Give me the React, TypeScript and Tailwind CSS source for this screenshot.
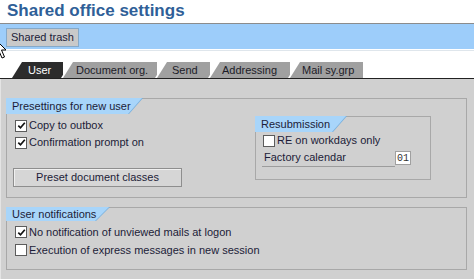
function Check({ checked }: { checked?: boolean }) {
  return (
    <span className="flex h-[12px] w-[12px] shrink-0 items-center justify-center border border-[#5c5c5c] bg-white">
      {checked && (
        <svg width="9" height="9" viewBox="0 0 9 9">
          <path d="M1.3 4.6 L3.5 6.8 L7.8 1.8" stroke="#111" strokeWidth="1.7" fill="none" />
        </svg>
      )}
    </span>
  );
}

function CheckRow({ checked, label, h }: { checked?: boolean; label: string; h: string }) {
  return (
    <div className={`flex items-center gap-[2px] ${h}`}>
      <Check checked={checked} />
      <span>{label}</span>
    </div>
  );
}

function GroupLabel({ w, h, children }: { w: string; h: string; children: string }) {
  return (
    <div className={`-ml-px -mt-px bg-[#78afdc] [clip-path:polygon(0_0,100%_0,calc(100%-14px)_100%,0_100%)] ${w} ${h}`}>
      <div className="mr-[1px] flex h-full items-center bg-[#a8d5fa] pl-[6px] [clip-path:polygon(0_0,100%_0,calc(100%-14px)_100%,0_100%)]">
        {children}
      </div>
    </div>
  );
}

const tabs = [
  { label: "User", w: "w-[53px]", pl: "pl-[16px]", active: true },
  { label: "Document org.", w: "w-[96px]", pl: "pl-[13px]", active: false },
  { label: "Send", w: "w-[55px]", pl: "pl-[15px]", active: false },
  { label: "Addressing", w: "w-[82px]", pl: "pl-[12px]", active: false },
  { label: "Mail sy.grp", w: "w-[75px]", pl: "pl-[12px]", active: false },
];

export default function App() {
  return (
    <div className="relative h-[279px] w-[474px] overflow-hidden bg-white font-['Liberation_Sans',Arial,sans-serif] text-[11px] text-[#1c1c38]">
      {/* Title */}
      <h1 className="h-[23px] pl-[7px] text-[17px] font-bold leading-[21px] text-[#2f5f98]">
        Shared office settings
      </h1>

      {/* Toolbar */}
      <div className="h-[26px] border-t border-[#8c8c8c] bg-[#9dcdfa] pl-[6px] pt-[4px]">
        <button className="flex h-[19px] w-[73px] items-center justify-center border border-[#86a9c8] bg-[#c9c9c9] text-[11px] text-[#1c1c38]">
          Shared trash
        </button>
      </div>
      <div className="h-[2px] border-b border-[#dfe6ec]" />

      {/* Tabs */}
      <div className="mt-[11px] flex h-[16px] pl-[10px]">
        {tabs.map((t, i) => (
          <div
            key={t.label}
            className={`h-full bg-white [clip-path:polygon(0_100%,10px_0,100%_0,100%_100%)] ${t.w} ${i > 0 ? "-ml-[2px]" : ""}`}
          >
            <div
              className={`ml-[2px] flex h-full items-center [clip-path:polygon(0_100%,10px_0,100%_0,100%_100%)] ${t.pl} ${
                t.active ? "bg-[#2c2c2c] text-white" : "bg-[#a0a0a0] text-[#1c1c28]"
              }`}
            >
              {t.label}
            </div>
          </div>
        ))}
      </div>
      <div className="h-[1px] bg-[#222]" />

      {/* Content */}
      <div className="h-[200px] border-l border-[#e4e4e4] bg-[#d0d0d0] pl-[5px] pt-[19px]">
        {/* Presettings */}
        <div className="h-[100px] w-[461px] border border-[#a8a8a8]">
          <GroupLabel w="w-[137px]" h="h-[16px]">Presettings for new user</GroupLabel>
          <div className="flex">
            <div className="w-[248px] pl-[8px] pt-[3px]">
              <CheckRow checked label="Copy to outbox" h="h-[17px]" />
              <CheckRow checked label="Confirmation prompt on" h="h-[17px]" />
              <button className="-ml-[2px] mt-[17px] flex h-[19px] w-[169px] items-center justify-center border border-[#8e8e8e] bg-[#d6d6d6] text-[11px] text-[#1c1c38] shadow-[inset_1px_1px_0_#f0f0f0]">
                Preset document classes
              </button>
            </div>

            {/* Resubmission */}
            <div className="mt-[2px] h-[64px] w-[176px] border border-[#a8a8a8]">
              <GroupLabel w="w-[92px]" h="h-[16px]">Resubmission</GroupLabel>
              <div className="pl-[7px]">
                <CheckRow label="RE on workdays only" h="h-[17px]" />
              </div>
              <div className="ml-[6px] flex h-[18px] items-center">
                <div className="flex h-full w-[133px] items-center border-b border-[#9c9c9c] pl-[2px]">
                  Factory calendar
                </div>
                <div className="flex h-[14px] w-[16px] items-center justify-center border border-[#a0a0a0] bg-white font-['Liberation_Mono',monospace] text-[10px] text-[#333]">
                  01
                </div>
              </div>
            </div>
          </div>
        </div>

        {/* User notifications */}
        <div className="mt-[9px] h-[63px] w-[461px] border border-[#a8a8a8]">
          <GroupLabel w="w-[104px]" h="h-[14px]">User notifications</GroupLabel>
          <div className="pl-[8px] pt-[2px]">
            <CheckRow checked label="No notification of unviewed mails at logon" h="h-[18px]" />
            <CheckRow label="Execution of express messages in new session" h="h-[18px]" />
          </div>
        </div>
      </div>

      {/* Mouse pointer */}
      <svg className="absolute left-0 top-[38px]" width="12" height="22" viewBox="0 0 12 22">
        <path d="M-5 1 L-5 17 L-1 13 L2 20 L4.5 19 L1.5 12 L6 12 Z" fill="#fff" stroke="#000" strokeWidth="1" />
      </svg>
    </div>
  );
}
